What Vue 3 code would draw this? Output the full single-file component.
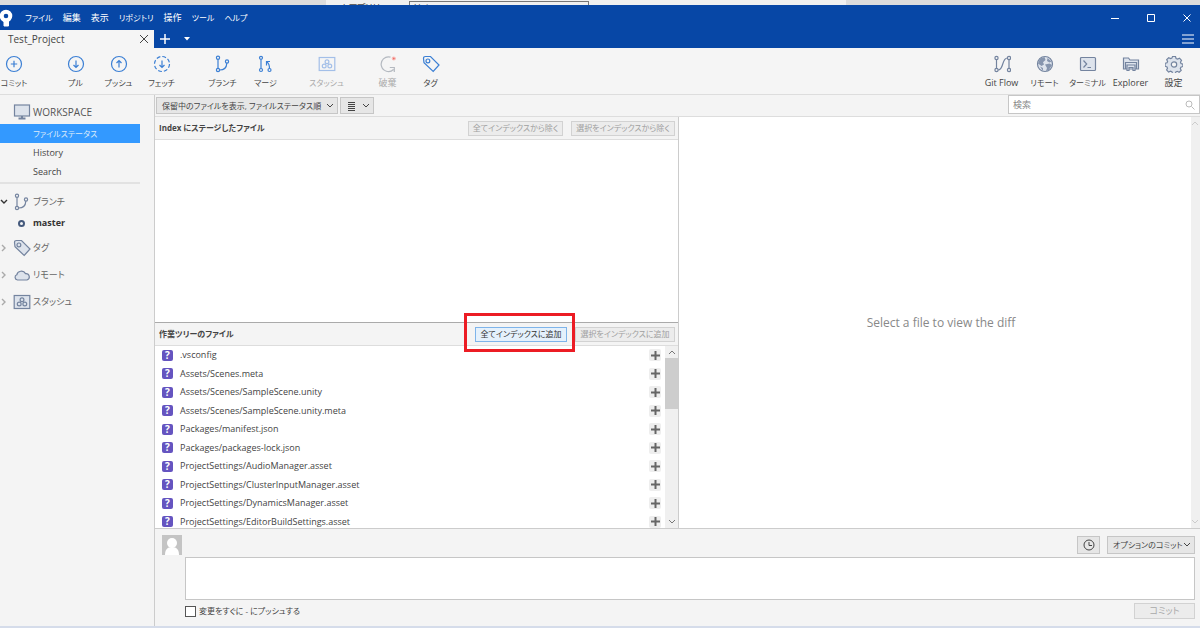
<script setup>
import { ref } from 'vue'

const menus = ['ファイル', '編集', '表示', 'リポジトリ', '操作', 'ツール', 'ヘルプ']

const toolGroups = [
  [{ id: 'commit', label: 'コミット' }],
  [{ id: 'pull', label: 'プル' }, { id: 'push', label: 'プッシュ' }, { id: 'fetch', label: 'フェッチ' }],
  [{ id: 'branch', label: 'ブランチ' }, { id: 'merge', label: 'マージ' }],
  [{ id: 'stash', label: 'スタッシュ', off: true }],
  [{ id: 'discard', label: '破棄', off: true }, { id: 'tag', label: 'タグ' }],
]

const sideTools = [
  { id: 'flow', label: 'Git Flow' },
  { id: 'remote', label: 'リモート' },
  { id: 'terminal', label: 'ターミナル' },
  { id: 'explorer', label: 'Explorer' },
  { id: 'settings', label: '設定' },
]

// Kana runs are set one size smaller than Latin and kanji labels.
const isKana = (s) => /^[ァ-ー]+$/.test(s)

const icons = {
  commit: '<circle cx="9" cy="9" r="7.5"/><path d="M9 5.8v6.4M5.8 9h6.4"/>',
  pull: '<circle cx="9" cy="9" r="7.5"/><path d="M9 5.5v7M6.5 10L9 12.5 11.500 10"/>',
  push: '<circle cx="9" cy="9" r="7.5"/><path d="M9 12.5v-7M6.500 8L9 5.500 11.500 8"/>',
  fetch: '<circle cx="9" cy="9" r="7.5" stroke-dasharray="3.9 2"/><path d="M9 5.500v7M6.500 10L9 12.500 11.500 10"/>',
  branch: '<circle cx="4" cy="2.800" r="1.600"/><circle cx="4" cy="15" r="1.600"/><circle cx="13" cy="6.500" r="1.600"/><path d="M4 4.600v8.800M5.600 15c4.500 0 7-2.500 7.200-6.900"/>',
  merge: '<circle cx="4" cy="2.800" r="1.500"/><circle cx="4" cy="15" r="1.500"/><circle cx="12.500" cy="15" r="1.500"/><path d="M4 4.500v9M12.500 13.500c0-3-.3-5-2.500-6.500M9.500 10.500V6.500h3.500"/>',
  stash: '<rect x="1.200" y="2.500" width="15.600" height="13"/><circle cx="9" cy="6.800" r="1.900"/><circle cx="6.200" cy="11" r="1.900"/><circle cx="11.800" cy="11" r="1.900"/>',
  discard: '<path d="M11.500 2.200A7.300 7.300 0 1 0 14.500 14.500M10.800 12.500h4.500v4.500"/><circle cx="14.800" cy="3.500" r="1.500" stroke="#f8bdb8" fill="#ee6d68"/>',
  tag: '<path d="M1.500 3.500q0-2 2-2h5l8.500 8.500-5.800 6.500-9.200-8.700z"/><circle cx="5.900" cy="5.900" r="1.900"/>',
  flow: '<circle cx="3.500" cy="3" r="1.600"/><circle cx="3.500" cy="15" r="1.600"/><circle cx="16" cy="3" r="1.600"/><circle cx="16" cy="15" r="1.600"/><path d="M3.500 4.600v8.800M16 4.600v8.800M5.100 15C11 15 8.500 3 14.400 3"/>',
  remote: '<circle cx="9" cy="9" r="7.500" class="tint"/><path fill="#8695ae" stroke="none" d="M4 3.500L8.500 2l1 3-2.500 2.200L8 9.500 5.500 11 2 8.500zM11.500 3l4 3.500-2 1-2.500-1.500zM9 9.500l4.500-1 2.500 1.500-3.500 5.500-2.500.5 1-3zM4 11.500l3 1.500v3z"/>',
  terminal: '<rect x="1.500" y="2.500" width="15" height="13" rx="1" class="tint"/><path d="M4.500 5.500l3.200 3.500-3.200 3.500M8.500 12.500H12"/>',
  explorer: '<path class="tint" d="M1.500 14V3h5l1.500 2h8.500v9zM3.500 14V7.500h11V14"/><path class="tint" d="M5 15.500V10h8v5.500h-2v-3H7v3z"/>',
  settings: '<path class="tint" d="M7.500 1.500h3l.6 2 1.500.6 1.900-.9 2 2.200-1 1.800.5 1.300 1.900.6v2.400l-2 .7-.6 1.300.9 1.900-2.100 1.900-1.900-1-1.300.6-.6 1.600h-2.700l-.7-1.700-1.400-.6-1.900.9-2-2.100.9-1.800-.5-1.300-1.900-.7V8.300l1.900-.6.6-1.300-.9-1.800 2-1.900 1.900.9 1.300-.5z"/><circle cx="9" cy="9.500" r="2.700" fill="#f5f5f5"/>',
  monitor: '<rect x="1.500" y="2" width="15" height="11" class="tint"/><path d="M5.500 15.500h7M9 13v2.500" stroke-width="2"/>',
  cloud: '<path class="tint" d="M4.500 14a2.700 2.700 0 0 1-.7-5.200 4.600 4.200 0 0 1 8.700-1.200 3.400 3.300 0 0 1 1.500 6.400z"/>',
}

const sections = [
  { icon: 'tag', label: 'タグ' },
  { icon: 'cloud', label: 'リモート' },
  { icon: 'stash', label: 'スタッシュ' },
]

const files = [
  '.vsconfig',
  'Assets/Scenes.meta',
  'Assets/Scenes/SampleScene.unity',
  'Assets/Scenes/SampleScene.unity.meta',
  'Packages/manifest.json',
  'Packages/packages-lock.json',
  'ProjectSettings/AudioManager.asset',
  'ProjectSettings/ClusterInputManager.asset',
  'ProjectSettings/DynamicsManager.asset',
  'ProjectSettings/EditorBuildSettings.asset',
]

const query = ref('')
const message = ref('')
const pushNow = ref(false)
</script>

<template>
  <div class="app">
    <div class="behind"><span class="behind-text">トマプリリ</span><span class="behind-box">Unity</span></div>

    <header class="titlebar">
      <svg class="logo" width="13" height="18" viewBox="0 0 13 18"><circle cx="6" cy="7" r="4.300" fill="none" stroke="#fff" stroke-width="4"/><path d="M4 11h4.500v6H4z" fill="#fff"/></svg>
      <nav class="menus"><button v-for="m in menus" :key="m" :class="{ kana: isKana(m) }">{{ m }}</button></nav>
      <div class="window-buttons">
        <button aria-label="最小化"><svg width="10" height="10"><path d="M1 5.500h8"/></svg></button>
        <button aria-label="最大化"><svg width="10" height="10"><path d="M1.500 1.500h7v7h-7z"/></svg></button>
        <button aria-label="閉じる"><svg width="10" height="10"><path d="M1.500 1.500l7 7M8.500 1.500l-7 7"/></svg></button>
      </div>
    </header>

    <div class="tabs">
      <div class="tab">
        <span>Test_Project</span>
        <button aria-label="タブを閉じる"><svg width="10" height="10"><path d="M1 1l8 8M9 1l-8 8"/></svg></button>
      </div>
      <button class="new-tab" aria-label="新しいタブ"><svg width="12" height="12"><path d="M6 1v10M1 6h10"/></svg></button>
      <button class="tab-list" aria-label="タブ一覧"><svg width="6" height="4"><path d="M0 0h6L3 3.500z"/></svg></button>
      <button class="burger" aria-label="メニュー"><svg width="12" height="10"><path d="M0 1h12M0 5h12M0 9h12"/></svg></button>
    </div>

    <div class="toolbar">
      <div v-for="(g, i) in toolGroups" :key="i" class="group">
        <button v-for="t in g" :key="t.id" class="tool" :class="t.id" :disabled="t.off">
          <svg class="icon" viewBox="0 0 18 18" v-html="icons[t.id]"></svg><span :class="{ kana: isKana(t.label) }">{{ t.label }}</span>
        </button>
      </div>
      <div class="group end">
        <button v-for="t in sideTools" :key="t.id" class="tool muted">
          <svg class="icon" viewBox="0 0 18 18" v-html="icons[t.id]"></svg><span :class="{ kana: isKana(t.label) }">{{ t.label }}</span>
        </button>
      </div>
    </div>

    <div class="body">
      <aside class="sidebar">
        <div class="workspace">
          <h2 class="muted"><svg class="icon" viewBox="0 0 18 18" v-html="icons.monitor"></svg>WORKSPACE</h2>
          <a href="#status" class="nav active kana">ファイルステータス</a>
          <a href="#history" class="nav">History</a>
          <a href="#search" class="nav">Search</a>
        </div>
        <button class="section muted branches">
          <svg class="caret open" width="8" height="8"><path d="M1 2l3 3 3-3"/></svg>
          <svg class="icon" viewBox="0 0 18 18" v-html="icons.branch"></svg>ブランチ
        </button>
        <a href="#master" class="current"><i></i>master</a>
        <button v-for="s in sections" :key="s.label" class="section muted">
          <svg class="caret" width="8" height="8"><path d="M2 1l3 3-3 3"/></svg>
          <svg class="icon filled" viewBox="0 0 18 18" v-html="icons[s.icon]"></svg>{{ s.label }}
        </button>
      </aside>

      <main class="main">
        <div class="filter">
          <button class="drop">保留中のファイルを表示, ファイルステータス順<svg width="8" height="6"><path d="M1 1l3 3 3-3"/></svg></button>
          <button class="drop view" aria-label="表示形式"><svg width="9" height="10"><path d="M1 1.500h7M1 3.500h7M1 5.500h7M1 7.500h7M1 9.500h7"/></svg><svg width="8" height="6"><path d="M1 1l3 3 3-3"/></svg></button>
          <label class="search"><input v-model="query" type="text" placeholder="検索" aria-label="検索"><svg width="10" height="10"><circle cx="4" cy="4" r="3"/><path d="M6.500 6.500L9.500 9.500"/></svg></label>
        </div>

        <div class="panes">
          <div class="files">
            <section class="pane">
              <div class="head">
                <h3>Index にステージしたファイル</h3>
                <button class="small w-out" disabled>全てインデックスから除く</button>
                <button class="small w-pick" disabled>選択をインデックスから除く</button>
              </div>
            </section>
            <section class="pane work">
              <div class="head">
                <h3>作業ツリーのファイル</h3>
                <div class="marked"><button class="small hot">全てインデックスに追加</button></div>
                <button class="small w-add" disabled>選択をインデックスに追加</button>
              </div>
              <div class="list">
                <ul>
                  <li v-for="f in files" :key="f"><b>?</b><span>{{ f }}</span><button aria-label="追加"><svg width="9" height="9"><path d="M4.500 0v9M0 4.500h9"/></svg></button></li>
                </ul>
                <div class="scroll">
                  <svg width="8" height="6"><path d="M1 5l3-3 3 3"/></svg>
                  <div class="thumb"></div>
                  <svg width="8" height="6"><path d="M1 1l3 3 3-3"/></svg>
                </div>
              </div>
            </section>
          </div>
          <section class="diff"><p>Select a file to view the diff</p><div class="diff-scroll"><svg width="8" height="6"><path d="M1 5l3-3 3 3"/></svg><svg width="8" height="6"><path d="M1 1l3 3 3-3"/></svg></div></section>
        </div>

        <footer class="commit-box">
          <div class="row">
            <svg class="avatar" width="20" height="20"><path fill="#c4c4c4" d="M0 0h20v20H0z"/><circle cx="10" cy="8" r="5" fill="#fff"/><path fill="#fff" d="M3 20c0-5 2-8 7-8s7 3 7 8z"/></svg>
            <button class="drop clock" aria-label="履歴"><svg width="12" height="12"><circle cx="6" cy="6" r="5"/><path d="M6 3v3.500h3"/></svg></button>
            <button class="drop option">オプションのコミット<svg width="8" height="6"><path d="M1 1l3 3 3-3"/></svg></button>
          </div>
          <textarea v-model="message" aria-label="コミットメッセージ"></textarea>
          <div class="row last">
            <label class="check"><input v-model="pushNow" type="checkbox">変更をすぐに - にプッシュする</label>
            <button class="submit" disabled>コミット</button>
          </div>
        </footer>
      </main>
    </div>
  </div>
</template>

<style>
body { margin: 0; }
</style>

<style scoped>
* { box-sizing: border-box; }
.app {
  display: flex;
  flex-direction: column;
  height: 100vh;
  overflow: hidden;
  background: #f4f4f4;
  border-bottom: 2px solid #d5dcea;
  color: #444;
  font: 9px/12px "Open Sans", "Noto Sans CJK JP", sans-serif;
  font-feature-settings: "palt";
}
button { margin: 0; padding: 0; border: 0; background: none; color: inherit; font: inherit; font-feature-settings: inherit; white-space: nowrap; }
a { color: inherit; text-decoration: none; }
h2, h3, p, ul { margin: 0; padding: 0; list-style: none; }
svg { display: block; flex: none; fill: none; stroke: currentColor; }
.kana { font-size: 8px; }

.behind { display: flex; flex: none; height: 5px; padding: 1px 0 0 342px; overflow: hidden; background: linear-gradient(90deg, #dcdcdc 326px, #f0f0f0 326px, #f0f0f0 846px, #dcdcdc 846px); }
.behind-text { width: 67px; padding-top: 1px; }
.behind-box { width: 180px; height: 14px; padding-left: 4px; border: 1px solid #777; }

.titlebar { display: flex; flex: none; align-items: center; height: 25px; background: #0747a6; color: #fff; }
.menus { display: flex; gap: 10px; margin-left: 12px; }
.window-buttons { display: flex; gap: 26px; margin-left: auto; padding-right: 8px; }

.tabs { display: flex; flex: none; align-items: center; height: 18px; background: #0747a6; color: #fff; }
.tab { display: flex; align-items: center; justify-content: space-between; width: 154px; height: 18px; padding: 0 5px 0 8px; background: #f5f5f5; color: #444; font-size: 10px; }
.new-tab { margin-left: 5px; }
.new-tab svg { stroke-width: 1.500; }
.tab-list { margin-left: 13px; }
.tab-list svg { fill: #fff; stroke: none; }
.burger { margin-left: auto; padding-right: 6px; }

.toolbar { display: flex; flex: none; gap: 18px; height: 47px; padding-right: 5px; background: #f5f5f5; border-bottom: 1px solid #ddd; }
.group { display: flex; }
.group.end { margin-left: auto; }
.tool { display: flex; flex-direction: column; align-items: center; gap: 4px; width: 43px; padding-top: 7px; }
.tool.commit { width: 28px; margin-right: 8px; }
.icon { width: 18px; height: 18px; color: #3b7fd4; stroke-width: 1.2; }
.tool:disabled { color: #aaa; }
.tool:disabled .icon { color: #a3bfe8; }
.tool.discard .icon { color: #b4b9c0; }
.muted .icon { color: #74849f; }
.icon :deep(.tint), .icon.filled { fill: #dde3ec; }

.body { display: flex; flex: 1; min-height: 0; }
.sidebar { flex: none; width: 155px; border-right: 1px solid #ccc; }
.workspace { width: 140px; height: 89px; padding-top: 7px; border-bottom: 2px solid #e2e2e2; }
.workspace h2 { display: flex; align-items: center; gap: 2px; height: 19px; margin-bottom: 3px; padding-left: 13px; font-size: 10px; font-weight: 400; color: #555; }
.nav { display: flex; align-items: center; height: 19px; padding-left: 33px; }
.nav.active { background: #3399ff; color: #dcebfa; }
.section { display: flex; align-items: center; width: 100%; height: 27px; gap: 2px; color: #666; }
.section .icon { margin-left: 3px; }
.section.branches { height: 35px; }
.caret { color: #aaa; stroke-width: 1.400; }
.caret.open { color: #333; }
.current { display: flex; align-items: center; gap: 8px; height: 14px; margin-top: -3px; margin-bottom: 4px; padding-left: 18px; font-weight: 700; color: #333; }
.current i { width: 7px; height: 7px; border: 2px solid #44597c; border-radius: 50%; }

.main { display: flex; flex: 1; flex-direction: column; min-width: 0; }
.filter { display: flex; flex: none; gap: 2px; height: 22px; padding: 2px 0 2px 1px; border-bottom: 1px solid #ddd; }
.drop { display: flex; align-items: center; justify-content: space-between; width: 182px; padding: 0 3px 0 5px; border: 1px solid #c6c6c6; background: #e6e6e6; font-size: 8px; }
.drop.view { width: 34px; padding-left: 6px; }
.search { display: flex; align-items: center; width: 192px; height: 19px; margin: -2px 0 0 auto; padding: 0 4px; border: 1px solid #c6c6c6; background: #fff; color: #bbb; }
.search input { flex: 1; min-width: 0; padding: 0; border: 0; outline: 0; font: inherit; }
.search input::placeholder { color: #888; }

.panes { display: flex; flex: 1; min-height: 0; }
.files { display: flex; flex: 0 1 524px; flex-direction: column; border-right: 1px solid #ccc; }
.pane { display: flex; flex: 1; flex-direction: column; min-height: 0; background: #fff; }
.pane.work { border-top: 1px solid #aaa; }
.head { display: flex; flex: none; align-items: center; height: 23px; padding: 0 3px 0 4px; border-bottom: 1px solid #ddd; background: #f4f4f4; }
.head h3 { flex: 1; font-size: 8px; font-weight: 700; }
.small { height: 15px; border: 1px solid #d2d2d2; background: #ececec; font-size: 8px; }
.small:disabled { color: #a0a0a0; }
.w-out { width: 95px; margin-right: 8px; }
.w-pick { width: 104px; }
.w-add { width: 100px; }
.hot { width: 92px; border-color: #7eb4ea; background: #e5f1fc; color: #333; }
.marked { position: relative; display: flex; margin-right: 8px; }
.marked::after { content: ""; position: absolute; z-index: 2; inset: -14px -8px -10px -11px; border: 3px solid #ec1c24; pointer-events: none; }

.list { display: flex; flex: 1; min-height: 0; overflow: hidden; }
.list ul { display: grid; flex: 1; grid-auto-rows: 1fr; height: calc(100% + 3px); padding-left: 7px; }
.list li { display: flex; align-items: center; min-height: 0; }
.list b { width: 11px; height: 11px; margin-right: 7px; border-radius: 2px; background: #6554c0; color: #fff; font-size: 10px; line-height: 11px; text-align: center; }
.list li span { flex: 1; }
.list li button { display: flex; align-items: center; justify-content: center; width: 12px; height: 12px; margin-right: 4px; border-radius: 2px; background: #eee; color: #666; }
.list li button svg { stroke-width: 2; }
.scroll { display: flex; flex-direction: column; align-items: center; width: 13px; padding: 3px 0; background: #f0f0f0; color: #777; }
.thumb { align-self: stretch; height: 51px; margin: 3px 0 auto; background: #cdcdcd; }
.diff { display: flex; flex: 1; min-width: 0; background: #fff; }
.diff p { flex: 1; align-self: center; padding-left: 12px; text-align: center; font-size: 12px; color: #888; }
.diff-scroll { display: flex; flex-direction: column; justify-content: space-between; width: 9px; padding: 3px 0; background: #f0f0f0; color: #ccc; }

.commit-box { display: flex; flex: none; flex-direction: column; height: 98px; padding: 6px 5px 0 7px; border-top: 1px solid #ccc; }
.row { display: flex; flex: none; align-items: center; }
.avatar { margin-right: auto; stroke: none; }
.clock { width: 23px; height: 18px; margin-right: 7px; padding: 0; justify-content: center; }
.option { width: 88px; height: 18px; }
.commit-box textarea { flex: none; height: 43px; margin: 2px 0 3px 23px; padding: 4px; border: 1px solid #c6c6c6; background: #fff; resize: none; outline: 0; font: inherit; }
.last { padding-left: 23px; }
.check { display: flex; align-items: center; gap: 3px; margin-right: auto; font-size: 8px; }
.check input { appearance: none; width: 11px; height: 11px; margin: 0; border: 1px solid #555; background: #fff; }
.submit { width: 61px; height: 16px; border: 1px solid #d2d2d2; background: #ececec; color: #a9a9a9; }
</style>
